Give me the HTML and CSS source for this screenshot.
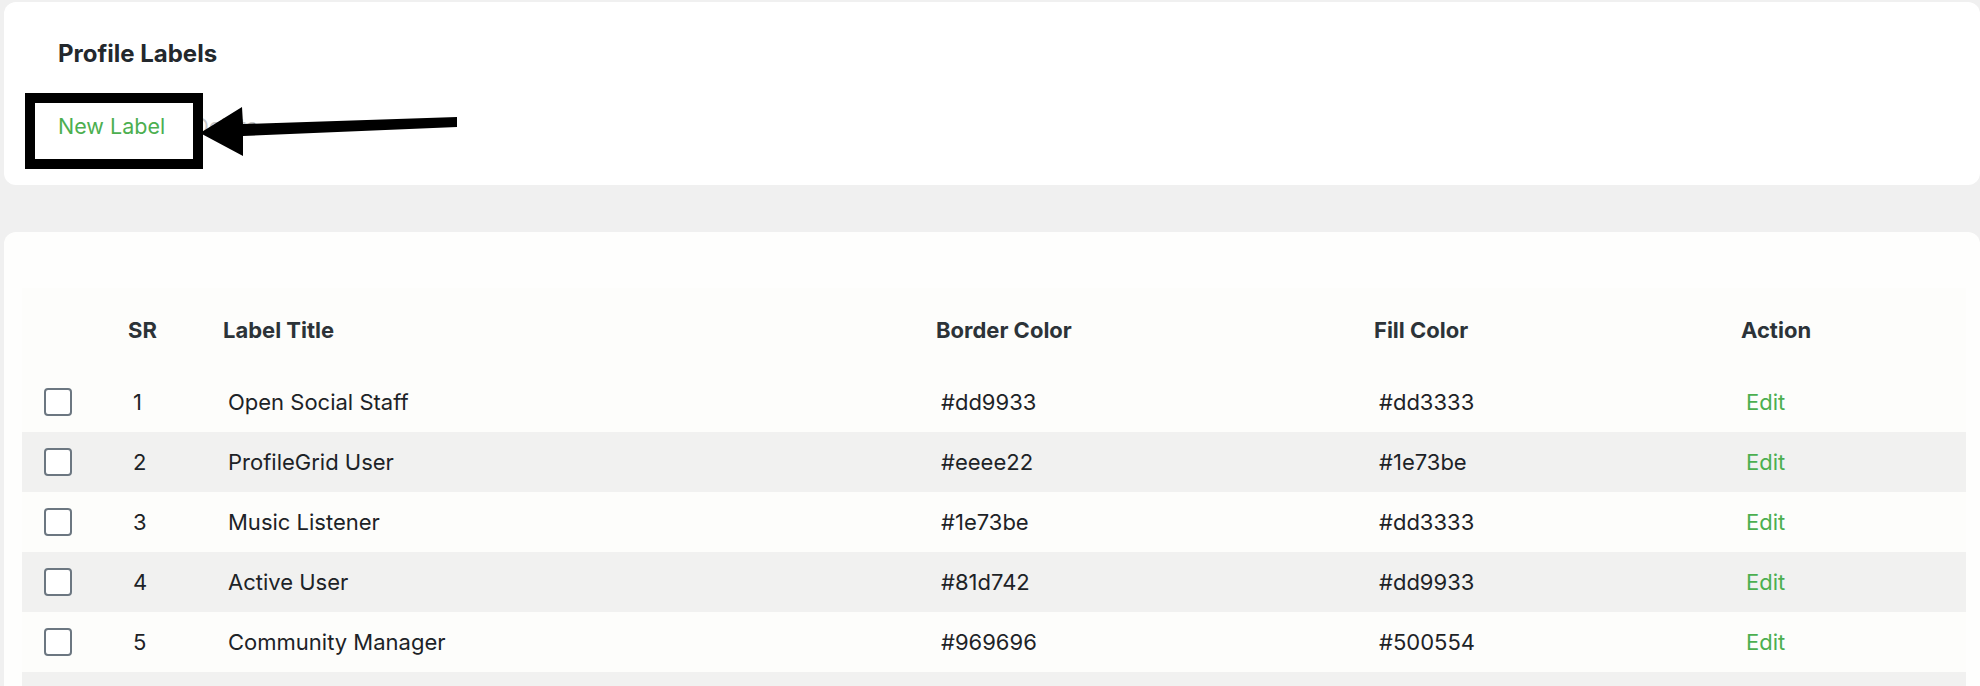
FILE: index.html
```html
<!DOCTYPE html>
<html lang="en">
<head>
<meta charset="utf-8">
<title>Profile Labels</title>
<link rel="stylesheet" href="styles.css">
</head>
<body>
<section class="card card-top">
  <h1 class="title">Profile Labels</h1>
  <div class="actions">
    <a class="link-new" href="#">New Label</a>
    <span class="link-delete">Delete</span>
  </div>
  <div class="annot-box"></div>
  <svg class="annot-arrow" width="270" height="60" viewBox="0 0 270 60" aria-hidden="true">
    <polygon points="0,35 42,9 43,26 257,19 257,29 43,38 43,58" fill="#000"/>
  </svg>
</section>

<section class="card card-table">
  <div class="table">
    <div class="row head">
      <div class="cell"></div>
      <div class="cell">SR</div>
      <div class="cell">Label Title</div>
      <div class="cell">Border Color</div>
      <div class="cell">Fill Color</div>
      <div class="cell">Action</div>
    </div>
    <div class="row">
      <div class="cell"><span class="check"></span></div>
      <div class="cell">1</div>
      <div class="cell">Open Social Staff</div>
      <div class="cell">#dd9933</div>
      <div class="cell">#dd3333</div>
      <div class="cell"><a class="edit" href="#">Edit</a></div>
    </div>
    <div class="row">
      <div class="cell"><span class="check"></span></div>
      <div class="cell">2</div>
      <div class="cell">ProfileGrid User</div>
      <div class="cell">#eeee22</div>
      <div class="cell">#1e73be</div>
      <div class="cell"><a class="edit" href="#">Edit</a></div>
    </div>
    <div class="row">
      <div class="cell"><span class="check"></span></div>
      <div class="cell">3</div>
      <div class="cell">Music Listener</div>
      <div class="cell">#1e73be</div>
      <div class="cell">#dd3333</div>
      <div class="cell"><a class="edit" href="#">Edit</a></div>
    </div>
    <div class="row">
      <div class="cell"><span class="check"></span></div>
      <div class="cell">4</div>
      <div class="cell">Active User</div>
      <div class="cell">#81d742</div>
      <div class="cell">#dd9933</div>
      <div class="cell"><a class="edit" href="#">Edit</a></div>
    </div>
    <div class="row">
      <div class="cell"><span class="check"></span></div>
      <div class="cell">5</div>
      <div class="cell">Community Manager</div>
      <div class="cell">#969696</div>
      <div class="cell">#500554</div>
      <div class="cell"><a class="edit" href="#">Edit</a></div>
    </div>
    <div class="row">
      <div class="cell"></div>
      <div class="cell"></div>
      <div class="cell"></div>
      <div class="cell"></div>
      <div class="cell"></div>
      <div class="cell"></div>
    </div>
  </div>
</section>
</body>
</html>
```

FILE: styles.css
```css
html, body {
  margin: 0;
  padding: 0;
}
body {
  background: #f0f0f0;
  font-family: Inter, "Noto Sans", "Liberation Sans", sans-serif;
  color: #1d2327;
  overflow: hidden;
  padding-top: 2px;
}
.card {
  background: #ffffff;
  margin-left: 4px;
  border-radius: 12px;
}
.card-top {
  position: relative;
  height: 183px;
  box-sizing: border-box;
  padding: 38px 0 0 54px;
}
.title {
  margin: 0 0 45px 0;
  font-size: 24px;
  line-height: 1.2;
  font-weight: 700;
  color: #23282d;
}
.actions {
  display: flex;
  gap: 28px;
  font-size: 21.5px;
  line-height: 1.2;
}
.link-new {
  color: #4caf50;
  text-decoration: none;
}
.link-delete {
  color: #c9c9c9;
}
.annot-box {
  position: absolute;
  left: 21px;
  top: 91px;
  width: 178px;
  height: 76px;
  box-sizing: border-box;
  border: 10px solid #000;
}
.annot-arrow {
  position: absolute;
  left: 196px;
  top: 96px;
}
.card-table {
  margin-top: 47px;
  padding: 56px 14px 0 18px;
  height: 600px;
  background: #fefefd;
}
.table {
  display: flex;
  flex-direction: column;
}
.row {
  display: grid;
  grid-template-columns: 96px 95px 713px 438px 367px 1fr;
  height: 60px;
  align-items: center;
  font-size: 22px;
  line-height: 26px;
  background: #fdfdfb;
}
.row:nth-child(odd) {
  background: #f1f1f0;
}
.row.head {
  height: 84px;
  background: #fdfdfb;
  font-weight: 700;
  color: #2c3338;
}
.cell {
  padding-left: 15px;
  white-space: nowrap;
}
.row.head .cell {
  padding-left: 10px;
}
.row .cell:first-child {
  padding-left: 22px;
  display: flex;
  align-items: center;
}
.check {
  display: block;
  width: 28px;
  height: 28px;
  box-sizing: border-box;
  border: 2px solid #6c7781;
  border-radius: 4px;
  background: #fff;
}
.edit {
  color: #4caf50;
  text-decoration: none;
}
```
